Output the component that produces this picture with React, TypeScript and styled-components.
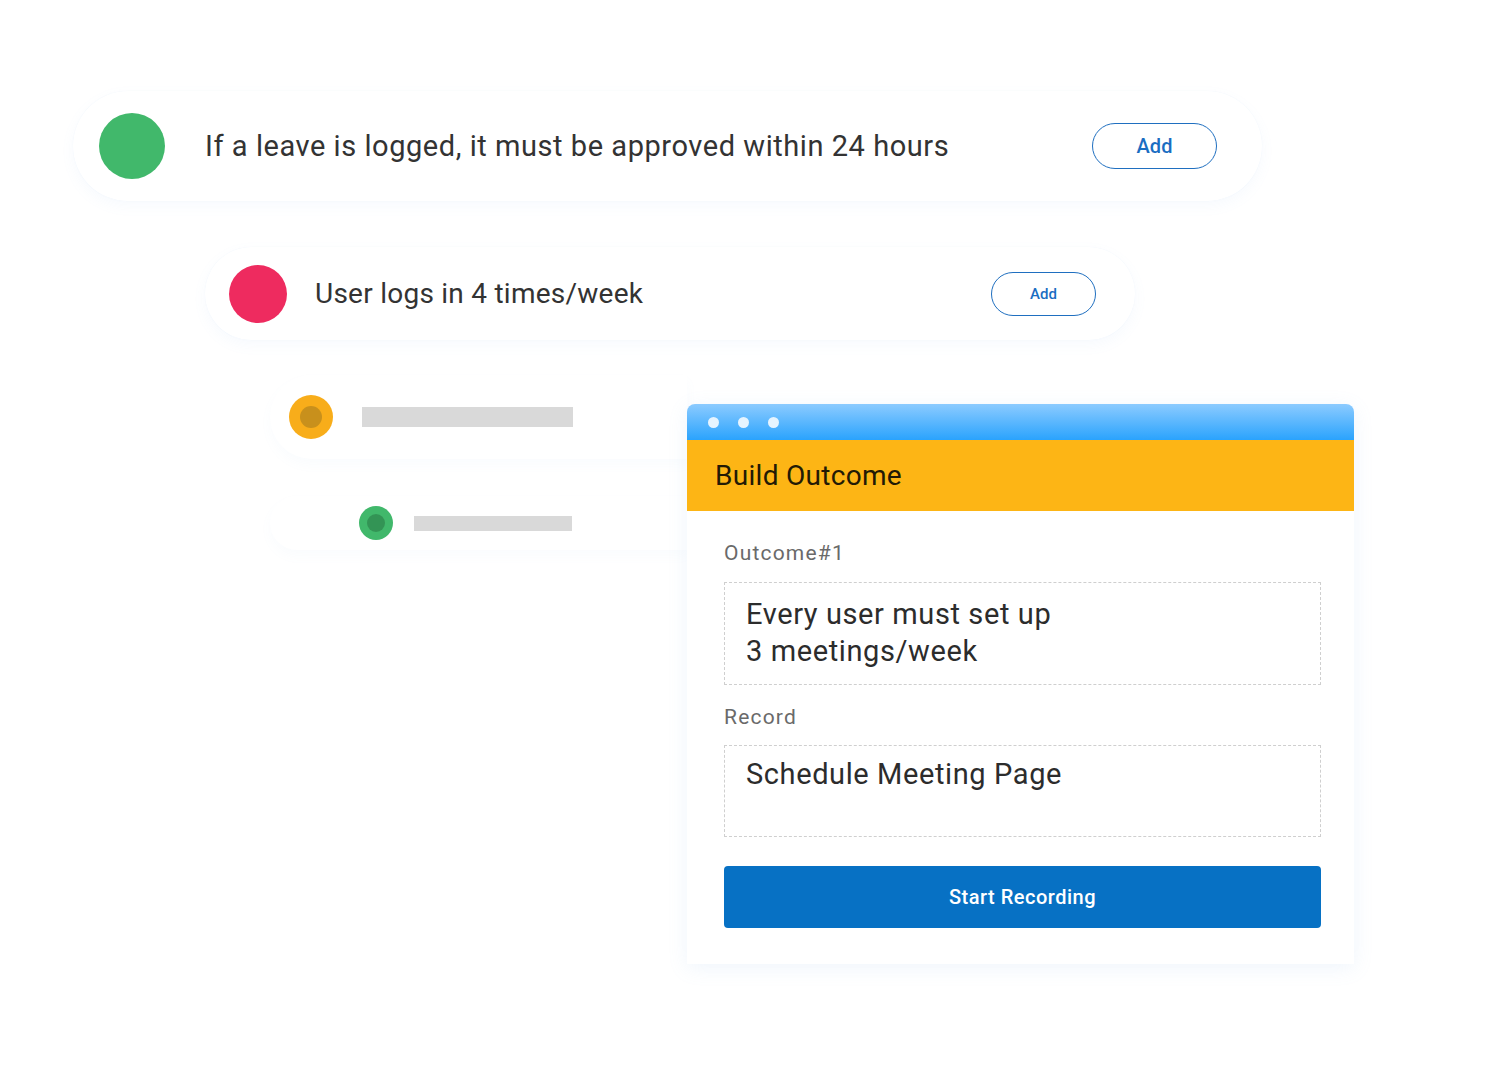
import styled, { createGlobalStyle } from "styled-components";

const Global = createGlobalStyle`
  html, body {
    margin: 0;
    background: #ffffff;
    font-family: Roboto, "Noto Sans", Arial, sans-serif;
  }
`;

const Stage = styled.div`
  width: 1490px;
  height: 1078px;
  padding-top: 91px;
  box-sizing: border-box;
  overflow: hidden;
`;

const RulePill = styled.div<{ $left: number; $width: number; $height: number; $mt?: number }>`
  margin-left: ${(p) => p.$left}px;
  margin-top: ${(p) => p.$mt ?? 0}px;
  width: ${(p) => p.$width}px;
  height: ${(p) => p.$height}px;
  border-radius: ${(p) => p.$height / 2}px;
  background: #fff;
  box-shadow: 0 5px 14px rgba(120, 170, 230, 0.06), 0 0 1px rgba(120, 170, 230, 0.12);
  display: flex;
  align-items: center;
  box-sizing: border-box;
`;

const Dot = styled.div<{ $size: number; $color: string; $inner?: string; $innerSize?: number }>`
  width: ${(p) => p.$size}px;
  height: ${(p) => p.$size}px;
  border-radius: 50%;
  background: ${(p) => p.$color};
  flex: none;
  display: flex;
  align-items: center;
  justify-content: center;
  &::after {
    content: "";
    display: ${(p) => (p.$inner ? "block" : "none")};
    width: ${(p) => p.$innerSize ?? 0}px;
    height: ${(p) => p.$innerSize ?? 0}px;
    border-radius: 50%;
    background: ${(p) => p.$inner};
  }
`;

const RuleText = styled.div<{ $gap: number; $fs: number; $ls: number }>`
  margin-left: ${(p) => p.$gap}px;
  flex: 1;
  font-size: ${(p) => p.$fs}px;
  color: #333;
  letter-spacing: ${(p) => p.$ls}px;
`;

const AddButton = styled.button<{ $w: number; $h: number; $fs: number }>`
  width: ${(p) => p.$w}px;
  height: ${(p) => p.$h}px;
  border-radius: ${(p) => p.$h / 2}px;
  border: 1.5px solid #1f6fc0;
  background: #fff;
  color: #1a6dc2;
  font-family: inherit;
  font-weight: 500;
  font-size: ${(p) => p.$fs}px;
  flex: none;
  cursor: pointer;
`;

const Lower = styled.div`
  display: flex;
  align-items: flex-start;
  margin-top: 35px;
`;

const Ghosts = styled.div`
  width: 417px;
  margin-left: 270px;
  display: flex;
  flex-direction: column;
`;

const GhostRow = styled.div<{ $indent: number; $height: number; $mt?: number }>`
  height: ${(p) => p.$height}px;
  margin-top: ${(p) => p.$mt ?? 0}px;
  padding-left: ${(p) => p.$indent}px;
  display: flex;
  align-items: center;
  border-radius: ${(p) => p.$height / 2}px 0 0 ${(p) => p.$height / 2}px;
  box-shadow: 0 6px 12px rgba(120, 170, 230, 0.04);
`;

const Bar = styled.div<{ $w: number; $h: number; $gap: number }>`
  width: ${(p) => p.$w}px;
  height: ${(p) => p.$h}px;
  margin-left: ${(p) => p.$gap}px;
  background: #d9d9d9;
`;

const Card = styled.div`
  width: 667px;
  margin-top: 29px;
  background: #fff;
  border-radius: 8px 8px 0 0;
  box-shadow: 0 4px 20px rgba(120, 170, 230, 0.12);
  padding-bottom: 36px;
`;

const TitleBar = styled.div`
  height: 36px;
  border-radius: 8px 8px 0 0;
  background: linear-gradient(#8ccbff, #2aa3fd);
  display: flex;
  align-items: center;
  gap: 19px;
  padding-left: 21px;
`;

const WinDot = styled.span`
  width: 11px;
  height: 11px;
  border-radius: 50%;
  background: #e6f4ff;
`;

const Banner = styled.div`
  height: 71px;
  background: #fdb515;
  display: flex;
  align-items: center;
  padding-left: 28px;
  font-size: 28px;
  letter-spacing: 0.3px;
  color: #231a05;
`;

const Body = styled.div`
  padding: 28px 33px 0 37px;
`;

const Label = styled.div<{ $mt?: number }>`
  font-size: 21px;
  letter-spacing: 1.2px;
  color: #6a6a6a;
  margin-top: ${(p) => p.$mt ?? 0}px;
  line-height: 28px;
`;

const Field = styled.div<{ $h: number; $mt: number; $pt: number }>`
  height: ${(p) => p.$h}px;
  margin-top: ${(p) => p.$mt}px;
  border: 1px dashed #cfcfcf;
  box-sizing: border-box;
  padding: ${(p) => p.$pt}px 21px 0;
  font-size: 29px;
  line-height: 37px;
  letter-spacing: 0.6px;
  color: #2c2c2c;
`;

const Primary = styled.button`
  display: block;
  width: 100%;
  height: 62px;
  margin-top: 29px;
  border: none;
  border-radius: 4px;
  background: #0771c4;
  color: #fff;
  font-family: inherit;
  font-size: 20px;
  font-weight: 500;
  letter-spacing: 0.5px;
`;

export default function App() {
  return (
    <>
      <Global />
      <Stage>
        <RulePill $left={73} $width={1189} $height={110} style={{ paddingLeft: 26, paddingRight: 45 }}>
          <Dot $size={66} $color="#41b86b" />
          <RuleText $gap={40} $fs={29} $ls={0.55}>
            If a leave is logged, it must be approved within 24 hours
          </RuleText>
          <AddButton $w={125} $h={46} $fs={20}>Add</AddButton>
        </RulePill>
        <RulePill $left={205} $width={930} $height={93} $mt={46} style={{ paddingLeft: 24, paddingRight: 39 }}>
          <Dot $size={58} $color="#ee2b5f" />
          <RuleText $gap={28} $fs={28} $ls={0.25}>
            User logs in 4 times/week
          </RuleText>
          <AddButton $w={105} $h={44} $fs={15}>Add</AddButton>
        </RulePill>
        <Lower>
          <Ghosts>
            <GhostRow $indent={19} $height={84}>
              <Dot $size={44} $color="#f8ad1a" $inner="#c8901c" $innerSize={22} />
              <Bar $w={211} $h={20} $gap={29} />
            </GhostRow>
            <GhostRow $indent={89} $height={54} $mt={37}>
              <Dot $size={34} $color="#41b86b" $inner="#339455" $innerSize={18} />
              <Bar $w={158} $h={15} $gap={21} />
            </GhostRow>
          </Ghosts>
          <Card>
            <TitleBar>
              <WinDot />
              <WinDot />
              <WinDot />
            </TitleBar>
            <Banner>Build Outcome</Banner>
            <Body>
              <Label>Outcome#1</Label>
              <Field $h={103} $mt={15} $pt={13}>
                Every user must set up
                <br />3 meetings/week
              </Field>
              <Label $mt={18}>Record</Label>
              <Field $h={92} $mt={14} $pt={10}>
                Schedule Meeting Page
              </Field>
              <Primary>Start Recording</Primary>
            </Body>
          </Card>
        </Lower>
      </Stage>
    </>
  );
}
